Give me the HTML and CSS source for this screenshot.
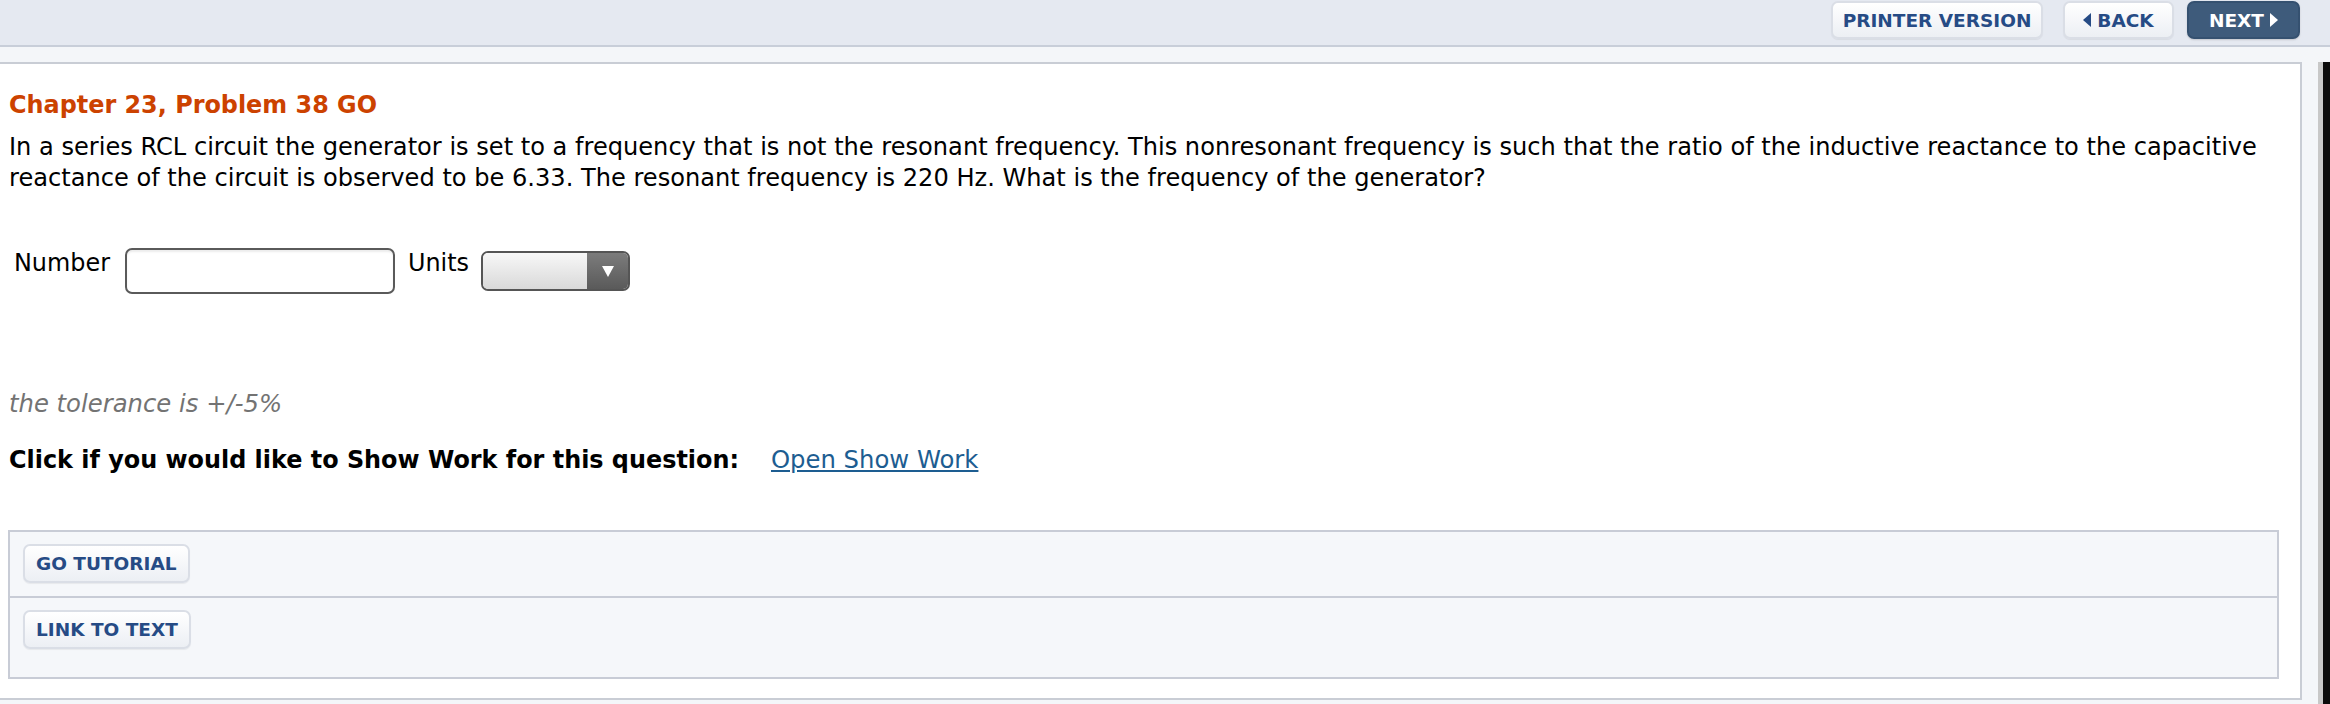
FILE: index.html
```
<!DOCTYPE html>
<html lang="en">
<head>
<meta charset="utf-8">
<title>Chapter 23, Problem 38 GO</title>
<link rel="stylesheet" href="styles.css">
</head>
<body>
<div class="topbar">
  <nav class="nav">
    <a class="btn btn-light btn-printer" href="#">PRINTER VERSION</a>
    <a class="btn btn-light btn-back" href="#"><svg class="tri" width="8" height="14" viewBox="0 0 8 14"><polygon points="8,0 8,14 0,7" fill="#264b85"/></svg>BACK</a>
    <a class="btn btn-dark btn-next" href="#">NEXT<svg class="tri" width="8" height="14" viewBox="0 0 8 14"><polygon points="0,0 8,7 0,14" fill="#ffffff"/></svg></a>
  </nav>
</div>
<div class="outer">
  <main class="panel">
    <h2 class="title">Chapter 23, Problem 38 GO</h2>
    <p class="question">In a series RCL circuit the generator is set to a frequency that is not the resonant frequency. This nonresonant frequency is such that the ratio of the inductive reactance to the capacitive reactance of the circuit is observed to be 6.33. The resonant frequency is 220 Hz. What is the frequency of the generator?</p>
    <div class="answer-row">
      <span class="label label-number">Number</span>
      <input class="num-input" type="text">
      <span class="label label-units">Units</span>
      <div class="select">
        <div class="select-field"></div>
        <div class="select-arrow"><svg width="12" height="11" viewBox="0 0 12 11"><polygon points="0,0 12,0 6,11" fill="#ffffff"/></svg></div>
      </div>
    </div>
    <p class="tolerance">the tolerance is +/-5%</p>
    <p class="showwork">Click if you would like to Show Work for this question:<a class="showwork-link" href="#">Open Show Work</a></p>
    <div class="resources">
      <div class="res-row res-row-first"><a class="btn btn-light btn-res" href="#">GO TUTORIAL</a></div>
      <div class="res-row res-row-last"><a class="btn btn-light btn-res" href="#">LINK TO TEXT</a></div>
    </div>
  </main>
  <div class="scrollbar"></div>
</div>
</body>
</html>
```
FILE: styles.css
```
* { box-sizing: border-box; }
html, body { margin: 0; padding: 0; }
body {
  width: 2330px;
  height: 704px;
  overflow: hidden;
  background: #f4f6f9;
  font-family: "DejaVu Sans", Verdana, sans-serif;
  color: #000;
}
.topbar {
  height: 47px;
  background: #e5e9f1;
  border-bottom: 2px solid #c8ced9;
  display: flex;
  justify-content: flex-end;
  padding-right: 30px;
}
.nav {
  display: flex;
  align-items: flex-start;
  padding-top: 1px;
}
.btn {
  display: inline-flex;
  align-items: center;
  justify-content: center;
  height: 38px;
  padding: 0 10px;
  border-radius: 7px;
  font-family: "DejaVu Sans", Verdana, sans-serif;
  font-weight: bold;
  font-size: 18.5px;
  text-decoration: none;
  white-space: nowrap;
}
.btn-light {
  color: #264b85;
  background: linear-gradient(#ffffff, #eceff4);
  border: 2px solid #dadee6;
  box-shadow: 0 1px 1px rgba(0,0,0,0.06);
}
.btn-dark {
  color: #ffffff;
  background: #3e5b7b;
  border: 2px solid #355170;
  box-shadow: 0 1px 2px rgba(0,0,0,0.15);
}
.btn-printer { width: 212px; }
.btn-back { width: 111px; margin-left: 20px; }
.btn-next { width: 113px; margin-left: 13px; }
.btn-back .tri { margin-right: 6px; }
.btn-next .tri { margin-left: 6px; }

.outer {
  display: flex;
  padding-top: 15px;
  height: 657px;
}
.panel {
  width: 2302px;
  flex: none;
  background: #ffffff;
  border: 2px solid #c9cdd5;
  border-left: none;
  padding: 26px 0 21px 8px;
  height: 638px;
}
.title {
  margin: 0;
  font-size: 23.9px;
  line-height: 30px;
  font-weight: bold;
  color: #cc4200;
  padding-left: 1px;
}
.question {
  margin: 12px 0 0 0;
  font-size: 24.1px;
  line-height: 31px;
  padding-left: 1px;
  padding-right: 18px;
}
.answer-row {
  display: flex;
  align-items: flex-start;
  margin-top: 54px;
  height: 46px;
}
.label {
  font-size: 23.9px;
  line-height: 30px;
}
.label-number { margin-left: 6px; }
.num-input {
  width: 270px;
  height: 46px;
  margin-left: 15px;
  border: 2px solid #5a5a5a;
  border-radius: 7px;
  background: #ffffff;
  box-shadow: inset 0 2px 2px rgba(0,0,0,0.08);
  padding: 0;
}
.label-units { margin-left: 13px; }
.select {
  display: flex;
  width: 149px;
  height: 40px;
  margin-top: 3px;
  margin-left: 12px;
  border: 2px solid #555555;
  border-radius: 7px;
  overflow: hidden;
}
.select-field {
  flex: 1;
  background: linear-gradient(#f7f7f7, #d9d9d9);
}
.select-arrow {
  width: 41px;
  display: flex;
  align-items: center;
  justify-content: center;
  background: linear-gradient(#7c7c7c, #5a5a5a);
}
.tolerance {
  margin: 95px 0 0 0;
  font-size: 24.3px;
  line-height: 30px;
  font-style: italic;
  color: #737373;
  padding-left: 1px;
}
.showwork {
  margin: 26px 0 0 0;
  font-size: 23.9px;
  line-height: 30px;
  font-weight: bold;
  padding-left: 1px;
}
.showwork-link {
  margin-left: 32px;
  font-size: 24.3px;
  font-weight: normal;
  color: #1d5d91;
  text-decoration: underline;
}
.resources {
  margin-top: 55px;
  width: 2271px;
  background: #f5f7fa;
  border: 2px solid #c8ccd6;
}
.res-row {
  padding: 12px 0 13px 13px;
}
.res-row-first {
  border-bottom: 2px solid #c8ccd6;
}
.res-row-last {
  padding-bottom: 28px;
}
.btn-res {
  height: 39px;
  padding: 0 11px;
}
.scrollbar {
  margin-left: 16px;
  width: 12px;
  flex: none;
  background: #0b0b0b;
  border-left: 5px solid #c8c8c8;
}
```
